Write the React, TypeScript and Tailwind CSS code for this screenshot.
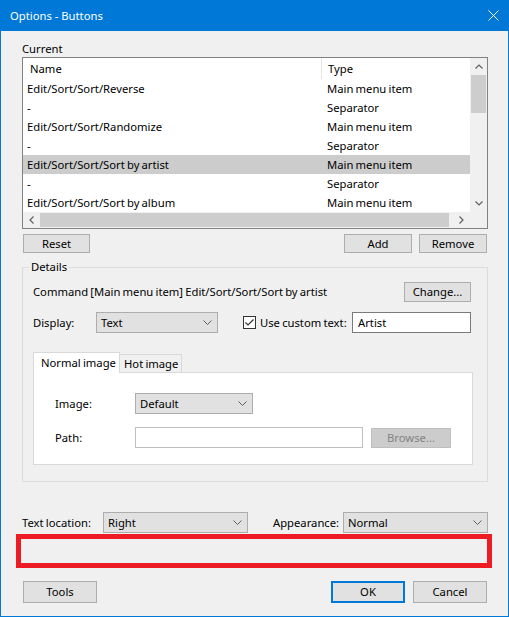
import React from "react";

const rows: { name: string; type: string; sel?: boolean }[] = [
  { name: "Edit/Sort/Sort/Reverse", type: "Main menu item" },
  { name: "-", type: "Separator" },
  { name: "Edit/Sort/Sort/Randomize", type: "Main menu item" },
  { name: "-", type: "Separator" },
  { name: "Edit/Sort/Sort/Sort by artist", type: "Main menu item", sel: true },
  { name: "-", type: "Separator" },
  { name: "Edit/Sort/Sort/Sort by album", type: "Main menu item" },
];

function Chevron() {
  return (
    <svg width="9" height="5" viewBox="0 0 9 5" className="shrink-0">
      <path d="M0.5 0.5 L4.5 4.5 L8.5 0.5" fill="none" stroke="#5f5f5f" strokeWidth="1" />
    </svg>
  );
}

function Combo({ text, className }: { text: string; className: string }) {
  return (
    <div className={"shrink-0 flex items-center justify-between border border-[#adadad] bg-[#e1e1e1] pl-[4px] pr-[5px] " + className}>
      <span>{text}</span>
      <Chevron />
    </div>
  );
}

function Btn({ children, className }: { children: React.ReactNode; className: string }) {
  return (
    <div className={"shrink-0 flex items-center justify-center border border-[#adadad] bg-[#e1e1e1] " + className}>
      {children}
    </div>
  );
}

function ArrowV({ up }: { up?: boolean }) {
  return (
    <svg width="8" height="5" viewBox="0 0 8 5">
      <path d={up ? "M0.5 4.5 L4 1 L7.5 4.5" : "M0.5 0.5 L4 4 L7.5 0.5"} fill="none" stroke="#606060" strokeWidth="1.2" />
    </svg>
  );
}

function ArrowH({ left }: { left?: boolean }) {
  return (
    <svg width="5" height="8" viewBox="0 0 5 8">
      <path d={left ? "M4.5 0.5 L1 4 L4.5 7.5" : "M0.5 0.5 L4 4 L0.5 7.5"} fill="none" stroke="#606060" strokeWidth="1.2" />
    </svg>
  );
}

export default function App() {
  return (
    <div className="w-[509px] h-[617px] bg-[#0078d7] px-[1px] pb-[1px] flex flex-col font-['Noto_Sans',sans-serif] text-[11.25px] leading-[16px] text-black whitespace-nowrap [word-spacing:-0.75px]">
      {/* Title bar */}
      <div className="h-[31px] shrink-0 flex items-center justify-between pl-[9px] pr-[9px] text-white [word-spacing:0px]">
        <span>Options - Buttons</span>
        <svg width="11" height="11" viewBox="0 0 11 11">
          <path d="M0.5 0.5 L10.5 10.5 M10.5 0.5 L0.5 10.5" stroke="#ffffff" strokeWidth="1" />
        </svg>
      </div>

      {/* Body */}
      <div className="flex-1 bg-[#f0f0f0] flex flex-col pt-[10px]">
        <div className="ml-[21px] h-[16px]">Current</div>

        {/* List view */}
        <div className="ml-[21px] w-[466px] h-[172px] border border-[#828282] flex flex-col">
          <div className="flex h-[154px]">
            <div className="flex-1 bg-white flex flex-col">
              <div className="h-[21px] flex">
                <div className="w-[299px] pl-[7px] flex items-center border-r border-[#e5e5e5]">Name</div>
                <div className="flex-1 pl-[6px] flex items-center">Type</div>
              </div>
              {rows.map((r, i) => (
                <div key={i} className={"h-[19px] flex items-center " + (r.sel ? "bg-[#cccccc]" : "")}>
                  <div className="w-[300px] pl-[4px]">{r.name}</div>
                  <div className="flex-1 pl-[4px]">{r.type}</div>
                </div>
              ))}
            </div>
            <div className="w-[17px] bg-[#f0f0f0] flex flex-col">
              <div className="h-[17px] flex items-center justify-center">
                <ArrowV up />
              </div>
              <div className="h-[38px] mx-[1px] bg-[#cdcdcd]" />
              <div className="flex-1" />
              <div className="h-[17px] flex items-center justify-center">
                <ArrowV />
              </div>
            </div>
          </div>
          <div className="flex h-[16px]">
            <div className="flex-1 bg-[#f0f0f0] flex items-center">
              <div className="w-[17px] flex items-center justify-center">
                <ArrowH left />
              </div>
              <div className="flex-1 h-[14px] bg-[#cdcdcd] mr-[4px]" />
              <div className="w-[17px] flex items-center justify-center">
                <ArrowH />
              </div>
            </div>
            <div className="w-[17px] bg-[#f0f0f0]" />
          </div>
        </div>

        {/* Reset / Add / Remove */}
        <div className="mt-[5px] flex pl-[22px] pr-[21px]">
          <Btn className="w-[67px] h-[19px]">Reset</Btn>
          <Btn className="ml-auto w-[68px] h-[19px]">Add</Btn>
          <Btn className="ml-[7px] w-[68px] h-[19px]">Remove</Btn>
        </div>

        {/* Details group */}
        <fieldset className="mt-[6px] ml-[21px] w-[466px] min-w-0 h-[223px] border border-[#dcdcdc] pl-[10px] pr-[16px]">
          <legend className="-ml-[4px] px-[2px] h-[16px]">Details</legend>
          <div className="mt-[7px] h-[20px] flex items-center">
            <span>Command [Main menu item] Edit/Sort/Sort/Sort by artist</span>
            <Btn className="ml-auto w-[67px] h-[20px]">Change...</Btn>
          </div>
          <div className="mt-[10px] h-[21px] flex items-center">
            <span className="w-[63px] shrink-0">Display:</span>
            <Combo text="Text" className="w-[122px] h-[21px]" />
            <div className="shrink-0 ml-[25px] w-[13px] h-[13px] border border-[#333333] bg-white flex items-center justify-center">
              <svg width="11" height="11" viewBox="0 0 11 11">
                <path d="M1.5 5.5 L4 8 L9.5 2.5" fill="none" stroke="#333333" strokeWidth="1.2" />
              </svg>
            </div>
            <span className="ml-[4px]">Use custom text:</span>
            <div className="shrink-0 ml-auto w-[119px] h-[21px] border border-[#7a7a7a] bg-white pl-[5px] flex items-center">Artist</div>
          </div>

          {/* Tabs */}
          <div className="mt-[19px] w-[440px]">
            <div className="h-[20px] flex items-end">
              <div className="relative z-10 -mb-[1px] h-[21px] w-[87px] bg-white border-t border-x border-[#d9d9d9] pl-[7px] flex items-center">
                Normal image
              </div>
              <div className="h-[18px] w-[62px] bg-[#f0f0f0] border-t border-r border-[#d9d9d9] pl-[4px] flex items-center">
                Hot image
              </div>
            </div>
            <div className="h-[93px] bg-white border border-[#d9d9d9] pl-[21px] pt-[20px]">
              <div className="h-[21px] flex items-center">
                <span className="w-[80px] shrink-0">Image:</span>
                <Combo text="Default" className="w-[118px] h-[21px]" />
              </div>
              <div className="mt-[13px] h-[21px] flex items-center">
                <span className="w-[80px] shrink-0">Path:</span>
                <div className="shrink-0 w-[228px] h-[21px] border border-[#bfbfbf] bg-white" />
                <div className="shrink-0 ml-[8px] w-[80px] h-[20px] border border-[#bfbfbf] bg-[#cccccc] text-[#838383] flex items-center justify-center">
                  Browse...
                </div>
              </div>
            </div>
          </div>
        </fieldset>

        {/* Text location / Appearance */}
        <div className="mt-[30px] h-[21px] pl-[21px] flex items-center">
          <span className="w-[81px] shrink-0">Text location:</span>
          <Combo text="Right" className="w-[145px] h-[21px]" />
          <span className="ml-[25px] w-[70px] shrink-0">Appearance:</span>
          <Combo text="Normal" className="w-[145px] h-[21px]" />
        </div>

        {/* Red highlight box */}
        <div className="mt-[1px] ml-[15px] w-[476px] h-[34px] border-[5px] border-[#ed1c24]" />

        {/* Bottom buttons */}
        <div className="mt-[13px] flex pl-[22px] pr-[21px]">
          <Btn className="w-[74px] h-[22px]">Tools</Btn>
          <div className="shrink-0 ml-auto w-[74px] h-[22px] border-2 border-[#0078d7] bg-[#e1e1e1] flex items-center justify-center">OK</div>
          <Btn className="ml-[8px] w-[74px] h-[22px]">Cancel</Btn>
        </div>
      </div>
    </div>
  );
}
